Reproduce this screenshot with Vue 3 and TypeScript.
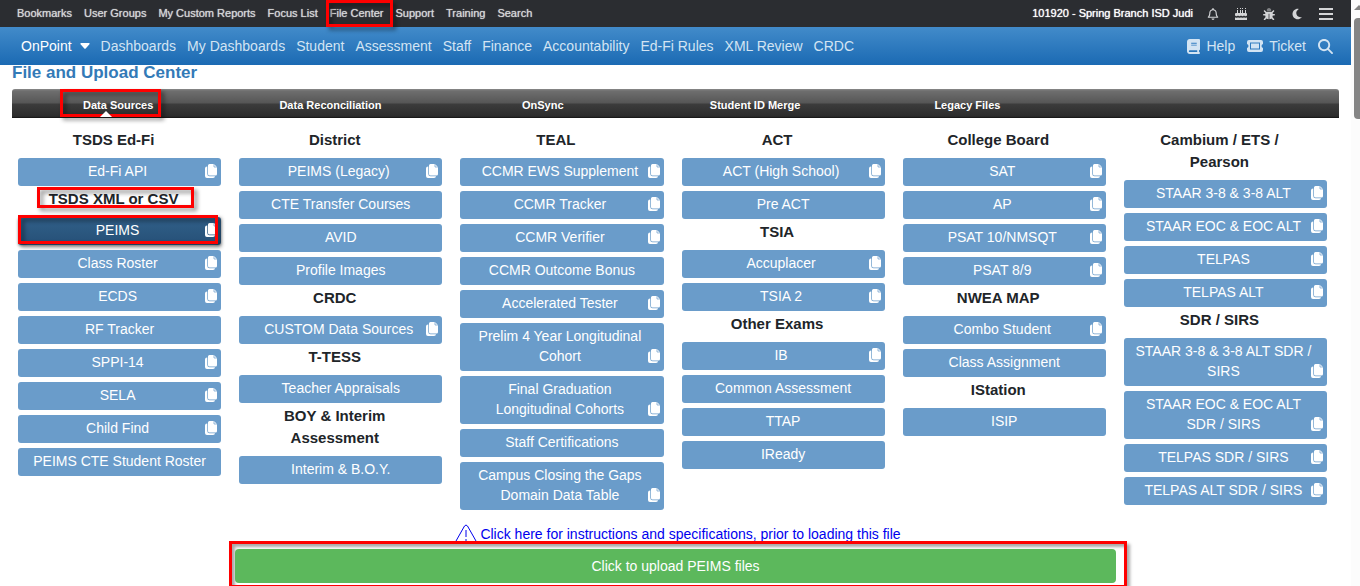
<script setup lang="ts">
interface Source {
  label: string
  files?: boolean
  active?: boolean
}
interface Section {
  title: string
  marked?: boolean
  items: Source[]
}

const topLinks: string[] = ['Bookmarks', 'User Groups', 'My Custom Reports', 'Focus List', 'File Center', 'Support', 'Training', 'Search']
const mainLinks: string[] = ['Dashboards', 'My Dashboards', 'Student', 'Assessment', 'Staff', 'Finance', 'Accountability', 'Ed-Fi Rules', 'XML Review', 'CRDC']
const tabs: string[] = ['Data Sources', 'Data Reconciliation', 'OnSync', 'Student ID Merge', 'Legacy Files']

const f = (label: string): Source => ({ label, files: true })
const p = (label: string): Source => ({ label })

const columns: Section[][] = [
  [
    { title: 'TSDS Ed-Fi', items: [f('Ed-Fi API')] },
    {
      title: 'TSDS XML or CSV',
      marked: true,
      items: [
        { label: 'PEIMS', files: true, active: true },
        f('Class Roster'), f('ECDS'), p('RF Tracker'), f('SPPI-14'), f('SELA'), f('Child Find'), p('PEIMS CTE Student Roster'),
      ],
    },
  ],
  [
    { title: 'District', items: [f('PEIMS (Legacy)'), p('CTE Transfer Courses'), p('AVID'), p('Profile Images')] },
    { title: 'CRDC', items: [f('CUSTOM Data Sources')] },
    { title: 'T-TESS', items: [p('Teacher Appraisals')] },
    { title: 'BOY & Interim Assessment', items: [p('Interim & B.O.Y.')] },
  ],
  [
    {
      title: 'TEAL',
      items: [
        f('CCMR EWS Supplement'), f('CCMR Tracker'), f('CCMR Verifier'), p('CCMR Outcome Bonus'), f('Accelerated Tester'),
        f('Prelim 4 Year Longitudinal Cohort'), f('Final Graduation Longitudinal Cohorts'), p('Staff Certifications'),
        f('Campus Closing the Gaps Domain Data Table'),
      ],
    },
  ],
  [
    { title: 'ACT', items: [f('ACT (High School)'), p('Pre ACT')] },
    { title: 'TSIA', items: [f('Accuplacer'), f('TSIA 2')] },
    { title: 'Other Exams', items: [f('IB'), p('Common Assessment'), p('TTAP'), p('IReady')] },
  ],
  [
    { title: 'College Board', items: [f('SAT'), f('AP'), f('PSAT 10/NMSQT'), f('PSAT 8/9')] },
    { title: 'NWEA MAP', items: [f('Combo Student'), p('Class Assignment')] },
    { title: 'IStation', items: [p('ISIP')] },
  ],
  [
    { title: 'Cambium / ETS / Pearson', items: [f('STAAR 3-8 & 3-8 ALT'), f('STAAR EOC & EOC ALT'), f('TELPAS'), f('TELPAS ALT')] },
    {
      title: 'SDR / SIRS',
      items: [f('STAAR 3-8 & 3-8 ALT SDR / SIRS'), f('STAAR EOC & EOC ALT SDR / SIRS'), f('TELPAS SDR / SIRS'), f('TELPAS ALT SDR / SIRS')],
    },
  ],
]
</script>

<template>
  <div class="window">
    <div class="page">
      <header>
        <div class="topbar">
          <nav class="links" aria-label="Utility">
            <a v-for="link in topLinks" :key="link" href="#">{{ link }}<span v-if="link === 'File Center'" class="mark mark-file"></span></a>
          </nav>
          <div class="user">
            <span class="name">101920 - Spring Branch ISD Judi</span>
            <button type="button" aria-label="Notifications">
              <svg viewBox="0 0 448 512"><path d="M224 0c-17.700 0-32 14.300-32 32v19.200C119 66 64 130.600 64 208v25.400c0 45.400-15.500 89.500-43.800 124.900L5.300 377c-5.800 7.200-6.900 17.100-2.900 25.400S14.800 416 24 416h400c9.200 0 17.600-5.300 21.600-13.600s2.900-18.200-2.900-25.400l-14.900-18.600C399.500 322.900 384 278.800 384 233.400V208c0-77.400-55-142-128-156.800V32c0-17.700-14.300-32-32-32zm0 96c61.900 0 112 50.100 112 112v25.400c0 47.900 13.900 94.600 39.700 134.600H72.300C98.100 328 112 281.300 112 233.400V208c0-61.900 50.100-112 112-112zm64 352H160c0 17 6.700 33.300 18.700 45.300S207 512 224 512s33.300-6.700 45.300-18.700S288 465 288 448z" /></svg>
            </button>
            <button type="button" aria-label="Birthdays">
              <svg viewBox="0 0 12 12"><path d="M2 0h1v1H2zM5 0h1v1H5zM7 0h1v1H7zM10 0h1v1h-1zM2 2h1v3h2V2h1v3h1V2h1v3h2V2h1v3q1 0 1 1v1.500q-1.500 1.500-3 0-1.500 1.500-3 0-1.500 1.500-3 0-1.500 1.500-3 0V6q0-1 1-1h1zM0 9.200q1.500 1 3 0 1.500 1 3 0 1.500 1 3 0 1.500 1 3 0V12H0z" /></svg>
            </button>
            <button type="button" aria-label="Report a bug">
              <svg viewBox="0 0 512 512"><path class="dim" d="M256 0c53 0 96 43 96 96v4c0 15-12 28-28 28H188c-16 0-28-13-28-28v-4c0-53 43-96 96-96z" /><path d="M41 105c13-13 33-13 46 0l64 64c12-6 25-9 39-9h132c14 0 27 3 39 9l64-64c13-13 33-13 46 0s13 33 0 46l-64 64c8 13 13 28 15 41h58c18 0 32 14 32 32s-14 32-32 32h-64c0 25-5 48-15 69l70 76c13 13 13 33 0 46s-33 13-46 0l-62-68c-25 20-56 33-91 37V240h-32v240c-35-4-66-17-91-37l-62 68c-13 13-33 13-46 0s-13-33 0-46l70-76c-10-21-15-44-15-69H32c-18 0-32-14-32-32s14-32 32-32h58c2-15 7-29 15-41l-64-64c-13-13-13-33 0-46z" /></svg>
            </button>
            <button type="button" aria-label="Dark mode">
              <svg viewBox="0 0 384 512"><path d="M223.500 32C100 32 0 132.300 0 256s100 224 223.500 224c60.600 0 115.500-24.200 155.800-63.400 5-4.900 6.300-12.500 3.100-18.700s-10.100-9.700-17-8.500c-9.800 1.700-19.800 2.600-30.100 2.600-96.900 0-175.500-78.800-175.500-176 0-65.800 36-123.100 89.300-153.300 6.100-3.500 9.200-10.500 7.700-17.300s-7.300-11.900-14.300-12.500c-6.300-.5-12.600-.8-19-.8z" /></svg>
            </button>
            <button type="button" class="wide" aria-label="Menu">
              <svg viewBox="0 0 14 12"><path d="M0 0h14v2H0zM0 5h14v2H0zM0 10h14v2H0z" /></svg>
            </button>
          </div>
        </div>
        <div class="mainbar">
          <nav class="links" aria-label="Main">
            <a href="#" class="brand">OnPoint<svg viewBox="0 0 10 6"><path d="M1 0h8q1 .4.400 1.200L5.700 5.500q-.7.700-1.400 0L.6 1.200Q0 .4 1 0z" /></svg></a>
            <a v-for="link in mainLinks" :key="link" href="#">{{ link }}</a>
          </nav>
          <div class="tools">
            <a href="#"><svg class="book" viewBox="0 0 448 512"><path fill-rule="evenodd" d="M96 0C43 0 0 43 0 96v320c0 53 43 96 96 96h320c18 0 32-14 32-32s-14-32-32-32v-64c18 0 32-14 32-32V32c0-18-14-32-32-32H96zm0 384h256v64H96c-18 0-32-14-32-32s14-32 32-32zM144 128h192v32H144zM144 192h192v32H144z" /></svg>Help</a>
            <a href="#"><svg class="stub" viewBox="0 0 16 12"><path fill-rule="evenodd" d="M2 0h12q2 0 2 2v2q-1.500.5-1.500 2t1.500 2v2q0 2-2 2H2q-2 0-2-2V8q1.500-.5 1.500-2T0 4V2q0-2 2-2zM3 2.500v7h10v-7z" /><path d="M4 3.500h8v5H4z" /></svg>Ticket</a>
            <button type="button" aria-label="Search">
              <svg class="lens" viewBox="0 0 512 512"><path d="M416 208c0 45.900-14.900 88.300-40 122.700L502.600 457.400c12.500 12.500 12.500 32.800 0 45.300s-32.800 12.500-45.300 0L330.700 376c-34.400 25.200-76.800 40-122.700 40C93.100 416 0 322.900 0 208S93.100 0 208 0s208 93.100 208 208zM208 352a144 144 0 1 0 0-288 144 144 0 1 0 0 288z" /></svg>
            </button>
          </div>
        </div>
      </header>

      <main>
        <h1>File and Upload Center</h1>
        <nav class="tabs" aria-label="File center">
          <a v-for="(tab, i) in tabs" :key="tab" href="#" :class="{ current: i === 0 }">{{ tab }}<span v-if="i === 0" class="mark mark-tab"></span></a>
        </nav>

        <div class="sources">
          <div v-for="(column, c) in columns" :key="c" class="column">
            <section v-for="section in column" :key="section.title">
              <h2>{{ section.title }}<span v-if="section.marked" class="mark mark-title"></span></h2>
              <div class="list">
                <button
                  v-for="item in section.items"
                  :key="item.label"
                  type="button"
                  class="source"
                  :class="{ files: item.files, active: item.active }"
                >
                  {{ item.label }}
                  <svg v-if="item.files" class="copy" viewBox="0 0 12 14">
                    <path d="M2 2.500h6a2 2 0 0 1 2 2V12a2 2 0 0 1-2 2H2a2 2 0 0 1-2-2V4.500a2 2 0 0 1 2-2z" />
                    <path class="gap" d="M4.500 0H9l3 3v7a1.500 1.500 0 0 1-1.500 1.500h-6A1.500 1.500 0 0 1 3 10V1.500A1.500 1.500 0 0 1 4.500 0z" />
                    <path d="M4.500 0H9l3 3v7a1.500 1.500 0 0 1-1.500 1.500h-6A1.500 1.500 0 0 1 3 10V1.500A1.500 1.500 0 0 1 4.500 0z" />
                    <path class="fold" d="M9 0v3h3" />
                  </svg>
                  <span v-if="item.active" class="mark mark-source"></span>
                </button>
              </div>
            </section>
          </div>
        </div>

        <div class="footer">
          <div class="instructions">
            <a href="#">
              <svg viewBox="0 0 22 20"><path d="M9.500 2Q11 0 12.500 2L21 17q.8 2-1.500 2h-17Q.2 19 1 17zM11 6v7M11 15v2" /></svg>Click here for instructions and specifications, prior to loading this file
            </a>
          </div>
          <div class="upload">
            <button type="button">Click to upload PEIMS files</button>
          </div>
        </div>
      </main>
    </div>
    <div class="scroll" aria-hidden="true">
      <div class="arrow"></div>
      <div class="thumb"></div>
    </div>
  </div>
</template>

<style>
body {
  margin: 0;
  background: #fff;
}
</style>

<style scoped>
.window {
  display: grid;
  grid-template-columns: minmax(0, 1fr) 9px;
  height: 100vh;
  overflow: hidden;
  font-family: "Liberation Sans", Arial, sans-serif;
  font-size: 14px;
  color: #212529;
}
.page {
  overflow: hidden;
}
a {
  color: inherit;
  text-decoration: none;
}
button {
  font: inherit;
  color: inherit;
  border: 0;
  padding: 0;
  background: none;
  cursor: pointer;
}
svg {
  display: block;
  fill: currentColor;
}
.topbar,
.mainbar {
  display: flex;
  justify-content: space-between;
  align-items: center;
  white-space: nowrap;
}
.topbar {
  height: 27px;
  padding: 0 18px 0 17px;
  background: #2b2d31;
  color: #d4d5d7;
  font-size: 11px;
  line-height: 13px;
  text-shadow: 0 0 1px currentColor;
}
.mainbar {
  height: 38px;
  padding: 0 18px 0 21px;
  background: linear-gradient(#428bca, #1b6ab3);
  color: #d3e4f3;
}
.links,
.tools,
.user {
  display: flex;
  align-items: center;
  gap: 12px;
}
.topbar .links {
  padding-bottom: 1px;
}
.mainbar .links {
  gap: 11px;
}
.links a {
  position: relative;
}
.brand,
.tools a {
  display: flex;
  align-items: center;
}
.brand {
  gap: 8px;
  color: #fff;
}
.brand svg {
  width: 10px;
  height: 6px;
}
.user {
  gap: 16px;
}
.user .name {
  color: #fff;
  margin-right: -2px;
  padding-bottom: 1px;
}
.user button {
  width: 12px;
}
.user .wide {
  width: 14px;
}
.user svg {
  width: 100%;
  height: 12px;
}
.dim {
  opacity: 0.5;
}
.tools a {
  gap: 6px;
}
.book {
  width: 13px;
  height: 15px;
}
.stub {
  width: 16px;
  height: 12px;
}
.lens {
  width: 15px;
  height: 15px;
}

/* Highlight frames laid over the steps to follow */
.mark {
  position: absolute;
  box-sizing: border-box;
  border: 3px solid #fe0000;
  filter: drop-shadow(3px 3px 2px rgba(0, 0, 0, 0.45));
  pointer-events: none;
}
.mark-file {
  inset: -7px -9px -7px -4px;
}
.mark-tab {
  inset: 0 calc(50% - 43px) 1px calc(50% - 58px);
}
.mark-title {
  inset: -1px 27px 2px 19px;
}
.mark-source {
  inset: -2px 3px 1px 0;
}

main {
  padding: 0 12px;
}
h1 {
  margin: 0 0 8px;
  font-size: 17px;
  line-height: 16px;
  color: #337ab7;
}
.tabs {
  display: flex;
  height: 29px;
  border-radius: 3px 3px 0 0;
  background: linear-gradient(#8a8a8a 0, #6e6e6e 2px, #565656 48%, #3c3c3c 52%, #2c2c2c 94%, #111 100%);
  color: #fff;
  font-size: 11px;
  font-weight: bold;
}
.tabs a {
  position: relative;
  width: 16%;
  line-height: 32px;
  text-align: center;
}
.tabs .current::after {
  content: "";
  position: absolute;
  left: calc(50% - 18px);
  bottom: 1px;
  border: 6px solid transparent;
  border-top: 0;
  border-bottom-color: #fff;
}
.sources {
  display: grid;
  grid-template-columns: repeat(6, minmax(0, 1fr));
  gap: 18px;
  padding: 11px 12px 0 6px;
}
.column {
  display: flex;
  flex-direction: column;
  gap: 2px;
}
h2 {
  position: relative;
  margin: 0 0 7px;
  padding: 0 22px 0 10px;
  font-size: 15px;
  line-height: 22px;
  text-align: center;
}
.list {
  display: flex;
  flex-direction: column;
  gap: 5px;
}
.source {
  position: relative;
  padding: 3px 12px 5px;
  border-radius: 3px;
  background: #6a9cca;
  color: #fff;
  line-height: 20px;
}
.source.files {
  padding-left: 10px;
  padding-right: 14px;
}
.source.active {
  background: linear-gradient(#316089, #265077);
  box-shadow: 0 1px 3px rgba(0, 0, 0, 0.4);
}
.copy {
  position: absolute;
  right: 4px;
  bottom: 8px;
  width: 12px;
  height: 14px;
}
.gap {
  stroke: #6a9cca;
  stroke-width: 1.400;
}
.active .gap {
  stroke: #2b5880;
}
.fold {
  fill: none;
  stroke: #6a9cca;
  stroke-width: 0.700;
}
.footer {
  padding: 14px 0 0 5px;
}
.instructions {
  display: flex;
  justify-content: center;
  color: #0000ee;
}
.instructions a {
  display: flex;
  gap: 3px;
  line-height: 20px;
}
.instructions svg {
  width: 22px;
  height: 20px;
  fill: none;
  stroke: currentColor;
}
.upload {
  position: relative;
  box-sizing: border-box;
  width: 68%;
  margin: -3px auto 0;
  padding: 5px 8px 2px 3px;
  border: 3px solid #fe0000;
  background: #fff;
  box-shadow: inset 3px 3px 3px #aaa, 3px 3px 3px #aaa;
}
.upload button {
  display: block;
  width: 100%;
  border-radius: 4px;
  background: #5cb85c;
  color: #fff;
  line-height: 34px;
}
.scroll {
  display: flex;
  flex-direction: column;
  gap: 8px;
  padding: 5px 0 0 3px;
  background: #fcfcfc;
  overflow: hidden;
}
.arrow {
  width: 0;
  border: 5px solid transparent;
  border-top: 0;
  border-bottom-color: #858585;
}
.thumb {
  width: 12px;
  height: 101px;
  border-radius: 4px;
  background: #858585;
}
</style>
